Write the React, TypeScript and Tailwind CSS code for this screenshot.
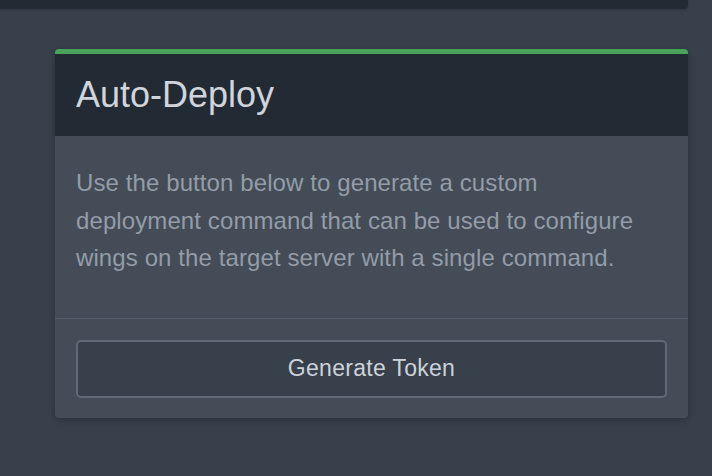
export default function App() {
  return (
    <div
      className="min-h-[476px] w-[712px] overflow-hidden bg-[#37404b] pr-[24px]"
      style={{ fontFamily: '"Liberation Sans", Arial, sans-serif' }}
    >
      {/* tail of the card above, scrolled mostly out of view */}
      <div className="h-[9px] w-full rounded-br-[4px] bg-[#222a34] shadow-sm" />

      <section className="ml-[55px] mt-[40px] overflow-hidden rounded-[4px] border-t-[5px] border-[#49a35b] bg-[#444c58] shadow-[0_2px_6px_rgba(0,0,0,0.25)]">
        <header className="flex h-[82px] items-center bg-[#222a34] px-[21px]">
          <h2 className="text-[36px] leading-none text-[#d0d5db]">Auto-Deploy</h2>
        </header>

        <div className="px-[21px] pb-[41px] pt-[28px]">
          <p className="text-[24px] leading-[37.5px] tracking-[0.1px] text-[#939ca7]">
            Use the button below to generate a custom
            <br />
            deployment command that can be used to configure
            <br />
            wings on the target server with a single command.
          </p>
        </div>

        <div className="border-t border-[#545d69] px-[21px] pb-[20px] pt-[21px]">
          <button
            type="button"
            className="flex h-[58px] w-full items-center justify-center rounded-[5px] border-2 border-[#5f6977] bg-[#37404b] text-[23px] tracking-[0.3px] text-[#cdd3da]"
          >
            Generate Token
          </button>
        </div>
      </section>
    </div>
  );
}
